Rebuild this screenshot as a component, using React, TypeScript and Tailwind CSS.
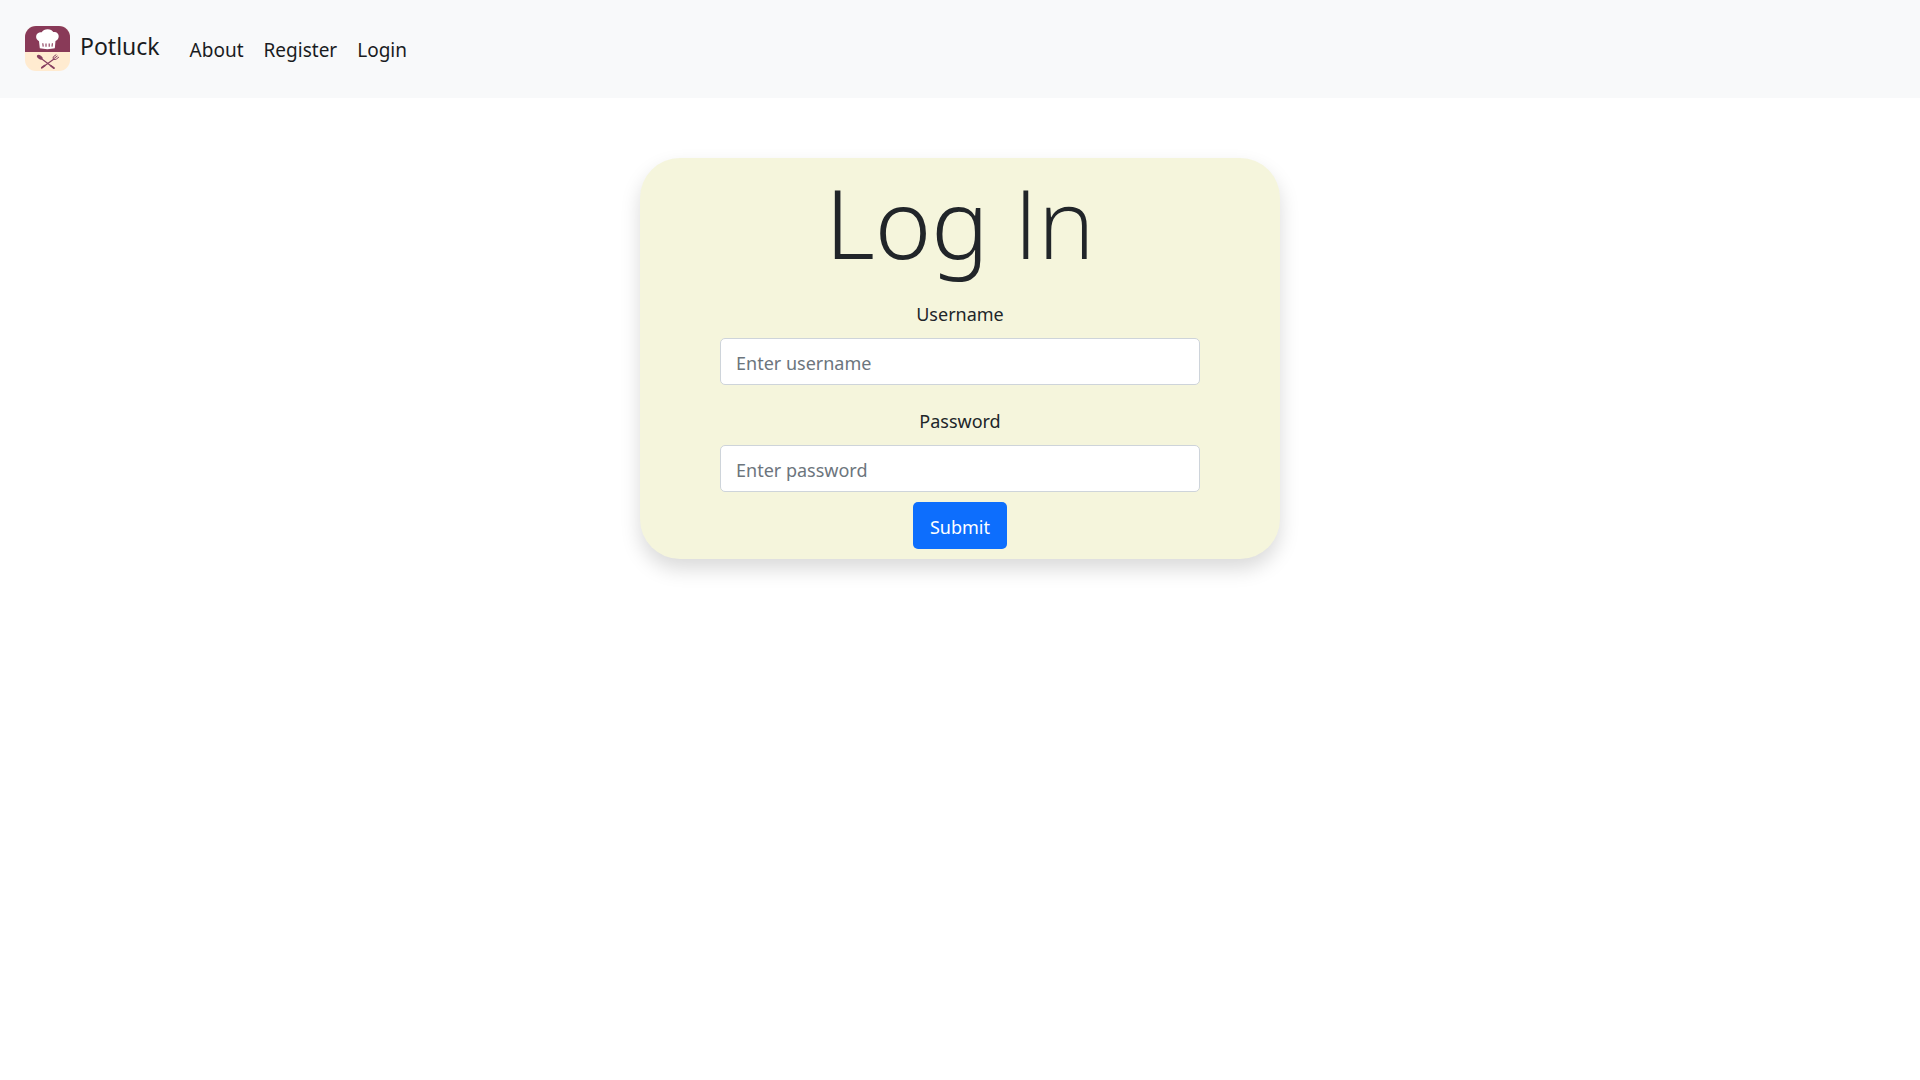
import type { ReactNode } from "react";

function Logo() {
  return (
    <svg viewBox="0 0 45 45" className="size-[45px] shrink-0" aria-hidden="true">
      <defs>
        <clipPath id="logo-shape">
          <rect width="45" height="45" rx="11" />
        </clipPath>
      </defs>
      <g clipPath="url(#logo-shape)">
        <rect width="45" height="45" fill="#ffebd0" />
        <rect width="45" height="26" fill="#893a58" />
      </g>
      <path
        d="M14.8 22.3 14 15.2C11.6 13.8 10.8 11.8 11.2 9.8 11.7 7.2 14.3 5.8 16.7 6.3 17.8 4.3 20 3.2 22.7 3.2 25.4 3.2 27.3 4.4 28.3 6.1 31.2 5.4 33.6 7.2 33.7 10 33.8 12.6 32.3 14.4 30.5 15.1L29.8 22.3C25.5 23.4 19.1 23.4 14.8 22.3Z"
        fill="#fff"
      />
      <path d="M17.8 17.3 18.2 20.6M21 17.5V20.8M24.2 17.5V20.8M27.4 17.3 27 20.6" stroke="#893a58" strokeWidth="1.1" fill="none" />
      <g stroke="#874060" fill="none" strokeLinecap="round">
        <path d="M16.5 32.7 29.2 42.2" strokeWidth="1.2" />
        <path d="M25.6 39.6 28.8 42" strokeWidth="1.8" />
        <path d="M29 33 16.5 42" strokeWidth="1.2" />
        <path d="M19.8 39.6 17 41.6" strokeWidth="1.8" />
        <path d="M31 28.8 28.3 30.8Q27.6 32.4 28.8 33.2 30 34 31.4 33L33.6 31.3M32.2 30.1 29.5 32.1" strokeWidth="1" />
      </g>
      <ellipse cx="14.8" cy="31.2" rx="3.2" ry="1.9" transform="rotate(35 14.8 31.2)" fill="#874060" />
    </svg>
  );
}

function NavLink({ children }: { children: ReactNode }) {
  return (
    <a href="#" className="px-[10px] py-2 text-[19px] leading-[30px]">
      {children}
    </a>
  );
}

function Field({ id, label, type, placeholder }: { id: string; label: string; type: string; placeholder: string }) {
  return (
    <div className="w-3/4">
      <label htmlFor={id} className="block pt-px pb-[9px] text-center leading-[30px]">
        {label}
      </label>
      <input
        id={id}
        type={type}
        placeholder={placeholder}
        className="block h-[47px] w-full rounded-[5px] border border-[#ced4da] bg-white px-[15px] pt-0.5 leading-[30px] placeholder:text-[#6c757d]"
      />
    </div>
  );
}

export default function App() {
  return (
    <div className="min-h-screen bg-white font-['Noto_Sans','Open_Sans',sans-serif] text-[18px] text-[#212529]">
      <nav className="flex h-[98px] items-center bg-[#f8f9fa] px-[25px] pb-0.5 text-[#1a1c1e]">
        <a href="#" className="mr-5 flex items-center gap-[10px] text-[23px]">
          <Logo />
          <span className="pb-1">Potluck</span>
        </a>
        <div className="flex items-center pt-1">
          <NavLink>About</NavLink>
          <NavLink>Register</NavLink>
          <NavLink>Login</NavLink>
        </div>
      </nav>
      <main className="mt-[60px]">
        <form
          className="mx-auto flex w-1/3 flex-col items-center rounded-[40px] bg-[#f5f5dc] pb-[10px] shadow-[0_10px_20px_rgba(0,0,0,0.15)]"
          onSubmit={(e) => e.preventDefault()}
        >
          <h1 className="mb-4 pt-1 text-center text-[96px] leading-[120px] font-light">
            Log <span className="font-['Open_Sans',sans-serif]">In</span>
          </h1>
          <Field id="username" label="Username" type="text" placeholder="Enter username" />
          <div className="h-5" />
          <Field id="password" label="Password" type="password" placeholder="Enter password" />
          <button type="submit" className="mt-[10px] h-[47px] rounded-[5px] bg-[#0d6efd] px-[17px] pt-0.5 leading-[30px] text-white">
            Submit
          </button>
        </form>
      </main>
    </div>
  );
}
